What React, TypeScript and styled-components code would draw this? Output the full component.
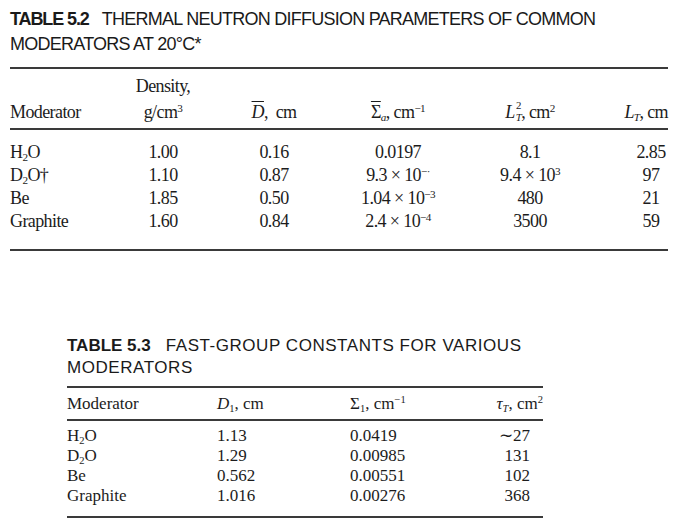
import styled, { createGlobalStyle } from 'styled-components';

const GlobalStyle = createGlobalStyle`
  body {
    margin: 0;
    background: #fff;
    color: #1c1c1c;
  }
`;

const Sub = styled.sub`
  font-size: 0.62em;
  vertical-align: -0.25em;
  line-height: 0;
`;

const Sup = styled.sup`
  font-size: 0.62em;
  vertical-align: 0.55em;
  line-height: 0;
`;

type Cell = React.ReactNode;

const thermalRows: Cell[][] = [
  [<>H<Sub>2</Sub>O</>, '1.00', '0.16', '0.0197', '8.1', '2.85'],
  [<>D<Sub>2</Sub>O†</>, '1.10', '0.87', <>9.3 × 10<Sup>−·</Sup></>, <>9.4 × 10<Sup>3</Sup></>, '97'],
  ['Be', '1.85', '0.50', <>1.04 × 10<Sup>−3</Sup></>, '480', '21'],
  ['Graphite', '1.60', '0.84', <>2.4 × 10<Sup>−4</Sup></>, '3500', '59'],
];

const fastRows: Cell[][] = [
  [<>H<Sub>2</Sub>O</>, '1.13', '0.0419', '∼27'],
  [<>D<Sub>2</Sub>O</>, '1.29', '0.00985', '131'],
  ['Be', '0.562', '0.00551', '102'],
  ['Graphite', '1.016', '0.00276', '368'],
];

const THERMAL_COLS = '108px 90px 132px 116px 148px 64px';
const FAST_COLS = '150px 133px 1fr auto';

const App = () => {
  return (
    <>
      <GlobalStyle />
      <S.Page>
        <S.ThermalBlock>
          <S.NarrowCaption>
            <S.CaptionLabel $tight>TABLE 5.2</S.CaptionLabel>THERMAL NEUTRON DIFFUSION PARAMETERS OF COMMON
            <br />
            MODERATORS AT 20°C*
          </S.NarrowCaption>
          <S.ThermalTable>
            <S.ThermalHead $cols={THERMAL_COLS}>
              <S.LeftCell>Moderator</S.LeftCell>
              <S.CenterCell>
                Density,
                <br />
                g/cm<Sup>3</Sup>
              </S.CenterCell>
              <S.CenterCell>
                <S.Bar>
                  <i>D</i>
                </S.Bar>
                ,&nbsp; cm
              </S.CenterCell>
              <S.CenterCell>
                <S.Bar>Σ</S.Bar>
                <Sub>
                  <i>a</i>
                </Sub>
                , cm<Sup>−1</Sup>
              </S.CenterCell>
              <S.CenterCell>
                <i>L</i>
                <S.Stack>
                  <span>2</span>
                  <i>T</i>
                </S.Stack>
                , cm<Sup>2</Sup>
              </S.CenterCell>
              <S.RightCell>
                <i>L</i>
                <Sub>
                  <i>T</i>
                </Sub>
                , cm
              </S.RightCell>
            </S.ThermalHead>
            <S.ThermalBody>
              {thermalRows.map((row, i) => (
                <S.ThermalRow key={i} $cols={THERMAL_COLS}>
                  {row.map((cell, j) =>
                    j === 0 ? (
                      <S.LeftCell key={j}>{cell}</S.LeftCell>
                    ) : j === 5 ? (
                      <S.LastCell key={j}>{cell}</S.LastCell>
                    ) : (
                      <S.CenterCell key={j}>{cell}</S.CenterCell>
                    ),
                  )}
                </S.ThermalRow>
              ))}
            </S.ThermalBody>
          </S.ThermalTable>
        </S.ThermalBlock>

        <S.FastBlock>
          <S.WideCaption>
            <S.CaptionLabel>TABLE 5.3</S.CaptionLabel>FAST-GROUP CONSTANTS FOR VARIOUS
            <br />
            MODERATORS
          </S.WideCaption>
          <S.FastTable>
            <S.FastHead $cols={FAST_COLS}>
              <S.LeftCell>Moderator</S.LeftCell>
              <S.LeftCell>
                <i>D</i>
                <Sub>1</Sub>, cm
              </S.LeftCell>
              <S.LeftCell>
                Σ<Sub>1</Sub>, cm<Sup>−1</Sup>
              </S.LeftCell>
              <S.RightCell>
                <i>τ</i>
                <Sub>
                  <i>T</i>
                </Sub>
                , cm<Sup>2</Sup>
              </S.RightCell>
            </S.FastHead>
            <S.FastBody>
              {fastRows.map((row, i) => (
                <S.FastRow key={i} $cols={FAST_COLS}>
                  {row.map((cell, j) =>
                    j === 3 ? (
                      <S.ValueRight key={j}>{cell}</S.ValueRight>
                    ) : (
                      <S.LeftCell key={j}>{cell}</S.LeftCell>
                    ),
                  )}
                </S.FastRow>
              ))}
            </S.FastBody>
          </S.FastTable>
        </S.FastBlock>
      </S.Page>
    </>
  );
};

export default App;

const S = {
  Page: styled.div`
    width: 691px;
    height: 524px;
    box-sizing: border-box;
    padding: 7px 0 0 10px;
    overflow: hidden;
  `,
  ThermalBlock: styled.section`
    width: 658px;
  `,
  NarrowCaption: styled.div`
    font-family: 'Liberation Sans', Arial, sans-serif;
    font-size: 18px;
    line-height: 25px;
    letter-spacing: -0.75px;
    color: #1a1a1a;
  `,
  WideCaption: styled.div`
    font-family: 'Liberation Sans', Arial, sans-serif;
    font-size: 17px;
    line-height: 22px;
    letter-spacing: 0.55px;
    color: #1a1a1a;
  `,
  CaptionLabel: styled.b<{ $tight?: boolean }>`
    letter-spacing: ${p => (p.$tight ? '-1.1px' : '0')};
    margin-right: ${p => (p.$tight ? '13px' : '15px')};
  `,
  ThermalTable: styled.div`
    margin-top: 10px;
    border-top: 2px solid #3a3a3a;
    border-bottom: 2px solid #3a3a3a;
    font-family: 'Liberation Serif', 'Times New Roman', serif;
    font-size: 18px;
    letter-spacing: -0.6px;
  `,
  ThermalHead: styled.div<{ $cols: string }>`
    display: grid;
    grid-template-columns: ${p => p.$cols};
    align-items: end;
    line-height: 26px;
    padding: 4px 0 3px;
    border-bottom: 2px solid #3a3a3a;
  `,
  ThermalBody: styled.div`
    padding: 11px 0 16px;
  `,
  ThermalRow: styled.div<{ $cols: string }>`
    display: grid;
    grid-template-columns: ${p => p.$cols};
    line-height: 23px;
  `,
  LeftCell: styled.div`
    text-align: left;
    white-space: nowrap;
  `,
  CenterCell: styled.div`
    text-align: center;
    white-space: nowrap;
  `,
  RightCell: styled.div`
    text-align: right;
    white-space: nowrap;
  `,
  LastCell: styled.div`
    text-align: center;
    white-space: nowrap;
    padding-left: 30px;
  `,
  ValueRight: styled.div`
    text-align: right;
    white-space: nowrap;
    padding-right: 13px;
  `,
  Bar: styled.span`
    text-decoration: overline;
    text-decoration-thickness: 1px;
  `,
  Stack: styled.span`
    display: inline-flex;
    flex-direction: column;
    font-size: 0.6em;
    line-height: 1.1em;
    vertical-align: 0.8em;
    margin-left: 1px;
  `,
  FastBlock: styled.section`
    width: 476px;
    margin: 84px 0 0 57px;
  `,
  FastTable: styled.div`
    margin-top: 7px;
    border-top: 2px solid #3a3a3a;
    border-bottom: 2px solid #3a3a3a;
    font-family: 'Liberation Serif', 'Times New Roman', serif;
    font-size: 17px;
  `,
  FastHead: styled.div<{ $cols: string }>`
    display: grid;
    grid-template-columns: ${p => p.$cols};
    line-height: 25px;
    padding: 3px 0;
    border-bottom: 2px solid #3a3a3a;
  `,
  FastBody: styled.div`
    padding: 5px 0 10px;
  `,
  FastRow: styled.div<{ $cols: string }>`
    display: grid;
    grid-template-columns: ${p => p.$cols};
    line-height: 20px;
  `,
};
